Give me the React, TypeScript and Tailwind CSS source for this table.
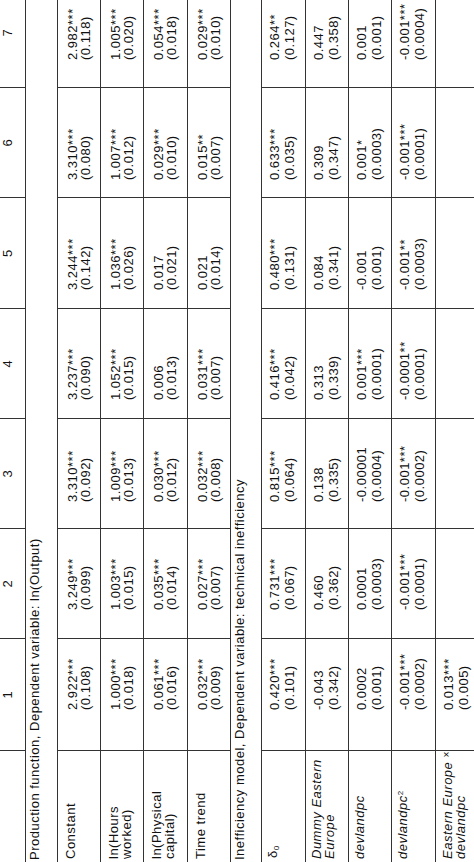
import type { ReactNode } from 'react';

type Row = {
  label: ReactNode;
  height: string;
  values: [string, string][];
};

const colWidths = [
  'w-[112px]',
  'w-[110px]',
  'w-[110px]',
  'w-[110px]',
  'w-[111px]',
  'w-[110px]',
  'w-[110px]',
];

const colPad = [
  'pl-[40px]',
  'pl-[28px]',
  'pl-[26px]',
  'pl-[18px]',
  'pl-[18px]',
  'pl-[17px]',
  'pl-[27px]',
];

const production: Row[] = [
  {
    label: 'Constant',
    height: 'h-[43px]',
    values: [
      ['2.922***', '(0.108)'],
      ['3.249***', '(0.099)'],
      ['3.310***', '(0.092)'],
      ['3.237***', '(0.090)'],
      ['3.244***', '(0.142)'],
      ['3.310***', '(0.080)'],
      ['2.982***', '(0.118)'],
    ],
  },
  {
    label: (
      <>
        ln(Hours
        <br />
        worked)
      </>
    ),
    height: 'h-[43px]',
    values: [
      ['1.000***', '(0.018)'],
      ['1.003***', '(0.015)'],
      ['1.009***', '(0.013)'],
      ['1.052***', '(0.015)'],
      ['1.036***', '(0.026)'],
      ['1.007***', '(0.012)'],
      ['1.005***', '(0.020)'],
    ],
  },
  {
    label: (
      <>
        ln(Physical
        <br />
        capital)
      </>
    ),
    height: 'h-[44px]',
    values: [
      ['0.061***', '(0.016)'],
      ['0.035***', '(0.014)'],
      ['0.030***', '(0.012)'],
      ['0.006', '(0.013)'],
      ['0.017', '(0.021)'],
      ['0.029***', '(0.010)'],
      ['0.054***', '(0.018)'],
    ],
  },
  {
    label: 'Time trend',
    height: 'h-[43px]',
    values: [
      ['0.032***', '(0.009)'],
      ['0.027***', '(0.007)'],
      ['0.032***', '(0.008)'],
      ['0.031***', '(0.007)'],
      ['0.021', '(0.014)'],
      ['0.015**', '(0.007)'],
      ['0.029***', '(0.010)'],
    ],
  },
];

const inefficiency: Row[] = [
  {
    label: (
      <span className="pl-[1px]">
        δ<sub className="text-[8px]">0</sub>
      </span>
    ),
    height: 'h-[44px]',
    values: [
      ['0.420***', '(0.101)'],
      ['0.731***', '(0.067)'],
      ['0.815***', '(0.064)'],
      ['0.416***', '(0.042)'],
      ['0.480***', '(0.131)'],
      ['0.633***', '(0.035)'],
      ['0.264**', '(0.127)'],
    ],
  },
  {
    label: (
      <span className="italic">
        Dummy Eastern
        <br />
        Europe
      </span>
    ),
    height: 'h-[43px]',
    values: [
      ['-0.043', '(0.342)'],
      ['0.460', '(0.362)'],
      ['0.138', '(0.335)'],
      ['0.313', '(0.339)'],
      ['0.084', '(0.341)'],
      ['0.309', '(0.347)'],
      ['0.447', '(0.358)'],
    ],
  },
  {
    label: <span className="italic">devlandpc</span>,
    height: 'h-[43px]',
    values: [
      ['0.0002', '(0.001)'],
      ['0.0001', '(0.0003)'],
      ['-0.00001', '(0.0004)'],
      ['0.001***', '(0.0001)'],
      ['-0.001', '(0.001)'],
      ['0.001*', '(0.0003)'],
      ['0.001', '(0.001)'],
    ],
  },
  {
    label: (
      <span className="italic">
        devlandpc<sup className="text-[8px] not-italic">2</sup>
      </span>
    ),
    height: 'h-[44px]',
    values: [
      ['-0.001***', '(0.0002)'],
      ['-0.001***', '(0.0001)'],
      ['-0.001***', '(0.0002)'],
      ['-0.0001**', '(0.0001)'],
      ['-0.001**', '(0.0003)'],
      ['-0.001***', '(0.0001)'],
      ['-0.001***', '(0.0004)'],
    ],
  },
  {
    label: (
      <span className="italic">
        Eastern Europe{' '}
        <span className="not-italic text-[10px] align-[2px]">×</span>
        <br />
        devlandpc
      </span>
    ),
    height: 'h-[43px]',
    values: [
      ['0.013***', '(0.005)'],
      ['', ''],
      ['', ''],
      ['', ''],
      ['', ''],
      ['', ''],
      ['', ''],
    ],
  },
];

function DataRow({ row, first }: { row: Row; first: boolean }) {
  return (
    <div className={`flex border-b border-[#333] ${row.height}`}>
      <div
        className={`w-[112px] shrink-0 border-r border-[#333] pl-[3px] leading-[13px] ${
          first ? 'pt-[6px]' : 'pt-[4px]'
        }`}
      >
        {row.label}
      </div>
      {row.values.map(([est, se], i) => (
        <div
          key={i}
          className={`${colWidths[i]} ${colPad[i]} shrink-0 border-r border-[#333] ${
            first ? 'pt-[8px] leading-[13px]' : 'pt-[5px] leading-[15px]'
          }`}
        >
          <div>{est}</div>
          <div>{se}</div>
        </div>
      ))}
    </div>
  );
}

function SectionRow({ children, height }: { children: ReactNode; height: string }) {
  return (
    <div className={`border-b border-[#333] pl-[2px] pt-[1px] leading-[15px] ${height}`}>
      {children}
    </div>
  );
}

export default function App() {
  return (
    <div className="h-[862px] w-[474px] overflow-hidden bg-white">
      <div
        className="h-[474px] w-[885px] origin-top-left text-[13px] tracking-[0.5px] text-[#111] [transform:translateY(862px)_rotate(-90deg)]"
        style={{ fontFamily: '"Liberation Sans", Arial, sans-serif' }}
      >
        <div className="flex h-[26px] border-b border-[#333]">
          <div className="w-[112px] shrink-0 border-r border-[#333]" />
          {colWidths.map((w, i) => (
            <div
              key={i}
              className={`${w} shrink-0 border-r border-[#333] text-center leading-[15px]`}
            >
              {i + 1}
            </div>
          ))}
        </div>

        <SectionRow height="h-[32px]">
          Production function, Dependent variable: ln(Output)
        </SectionRow>
        {production.map((r, i) => (
          <DataRow key={i} row={r} first />
        ))}

        <SectionRow height="h-[31px]">
          Inefficiency model, Dependent variable: technical inefficiency
        </SectionRow>
        {inefficiency.map((r, i) => (
          <DataRow key={i} row={r} first={false} />
        ))}
      </div>
    </div>
  );
}
